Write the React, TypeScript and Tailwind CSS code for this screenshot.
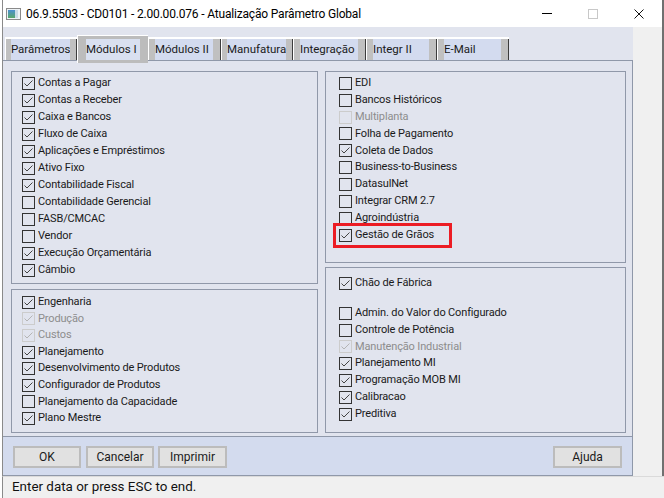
import React from 'react'

interface Item {
    label: string
    checked?: boolean
    disabled?: boolean
}

const leftTop: Item[] = [
    { label: 'Contas a Pagar', checked: true },
    { label: 'Contas a Receber', checked: true },
    { label: 'Caixa e Bancos', checked: true },
    { label: 'Fluxo de Caixa', checked: true },
    { label: 'Aplicações e Empréstimos', checked: true },
    { label: 'Ativo Fixo', checked: true },
    { label: 'Contabilidade Fiscal', checked: true },
    { label: 'Contabilidade Gerencial' },
    { label: 'FASB/CMCAC' },
    { label: 'Vendor' },
    { label: 'Execução Orçamentária', checked: true },
    { label: 'Câmbio', checked: true },
]

const leftBottom: Item[] = [
    { label: 'Engenharia', checked: true },
    { label: 'Produção', checked: true, disabled: true },
    { label: 'Custos', checked: true, disabled: true },
    { label: 'Planejamento', checked: true },
    { label: 'Desenvolvimento de Produtos', checked: true },
    { label: 'Configurador de Produtos', checked: true },
    { label: 'Planejamento da Capacidade' },
    { label: 'Plano Mestre', checked: true },
]

const rightTop: Item[] = [
    { label: 'EDI' },
    { label: 'Bancos Históricos' },
    { label: 'Multiplanta', disabled: true },
    { label: 'Folha de Pagamento' },
    { label: 'Coleta de Dados', checked: true },
    { label: 'Business-to-Business' },
    { label: 'DatasulNet' },
    { label: 'Integrar CRM 2.7' },
    { label: 'Agroindústria' },
    { label: 'Gestão de Grãos', checked: true },
]

const rightBottom: Item[] = [
    { label: 'Admin. do Valor do Configurado' },
    { label: 'Controle de Potência' },
    { label: 'Manutenção Industrial', checked: true, disabled: true },
    { label: 'Planejamento MI', checked: true },
    { label: 'Programação MOB MI', checked: true },
    { label: 'Calibracao', checked: true },
    { label: 'Preditiva', checked: true },
]

const tabs = [
    { label: 'Parâmetros', width: 'w-[72px]' },
    { label: 'Módulos I', width: 'w-[71px]', active: true },
    { label: 'Módulos II', width: 'w-[73px]' },
    { label: 'Manufatura', width: 'w-[72px]' },
    { label: 'Integração', width: 'w-[73px]' },
    { label: 'Integr II', width: 'w-[71px]' },
    { label: 'E-Mail', width: 'w-[72px]' },
]

function CheckRow({ item, rowClass }: { item: Item; rowClass: string }) {
    return (
        <div className={`flex items-center ${rowClass}`}>
            <span
                className={`flex size-[13px] shrink-0 items-center justify-center border ${
                    item.disabled ? 'border-[#cccccc]' : 'border-[#333333]'
                }`}
            >
                {item.checked && (
                    <svg width="11" height="11" viewBox="0 0 11 11">
                        <polyline
                            points="1.5,5.5 4,8 9.5,2.5"
                            fill="none"
                            stroke={item.disabled ? '#b4b4b4' : '#444444'}
                            strokeWidth="1"
                        />
                    </svg>
                )}
            </span>
            <span
                className={`ml-[3px] whitespace-nowrap text-[11px] tracking-[-0.15px] ${
                    item.disabled ? 'text-[#8d8d8d]' : 'text-[#1a1a1a]'
                }`}
            >
                {item.label}
            </span>
        </div>
    )
}

function WindowIcon() {
    return (
        <svg width="15" height="12" viewBox="0 0 15 12">
            <defs>
                <linearGradient id="ico" x1="0" y1="0" x2="0" y2="1">
                    <stop offset="0" stopColor="#4a8fd0" />
                    <stop offset="1" stopColor="#58a86a" />
                </linearGradient>
            </defs>
            <rect x="0.5" y="0.5" width="14" height="11" fill="#eef3f6" stroke="#8a8a8a" />
            <rect x="2" y="2" width="7" height="8" fill="url(#ico)" />
            <rect x="9" y="2" width="3" height="8" fill="#c9dbe6" />
        </svg>
    )
}

export default function App() {
    return (
        <div className="h-[498px] w-[664px] overflow-hidden bg-white font-['Roboto',sans-serif] text-[#1a1a1a]">
            <div className="ml-[2px] flex h-[476px] flex-col border-l border-r-2 border-l-[#8a8a8a] border-r-[#707070]">
                {/* Title bar */}
                <div className="flex h-[27px] shrink-0 items-center bg-white">
                    <div className="ml-[3px] flex items-center">
                        <WindowIcon />
                    </div>
                    <span className="ml-[5px] text-[12px] tracking-[-0.18px] text-black">
                        06.9.5503 - CD0101 - 2.00.00.076 - Atualização Parâmetro Global
                    </span>
                    <div className="ml-auto flex h-full">
                        <div className="flex w-[46px] items-center justify-center">
                            <span className="block h-px w-[10px] bg-black" />
                        </div>
                        <div className="flex w-[46px] items-center justify-center">
                            <span className="block size-[10px] border border-[#c8c8c8]" />
                        </div>
                        <div className="flex w-[46px] items-center justify-center">
                            <svg width="10" height="10" viewBox="0 0 10 10">
                                <path d="M0.5 0.5 L9.5 9.5 M9.5 0.5 L0.5 9.5" stroke="#111111" strokeWidth="1" />
                            </svg>
                        </div>
                    </div>
                </div>

                <div className="flex flex-1">
                    {/* Form area */}
                    <div className="flex w-[630px] flex-col bg-[#e1e4ee] pt-[10px]">
                        {/* Tabs */}
                        <div className="ml-[2px] flex h-[23px] items-start">
                            {tabs.map((t) =>
                                t.active ? (
                                    <div
                                        key={t.label}
                                        className={`relative z-10 -mt-[2px] flex h-[28px] shrink-0 border-l border-t border-white ${t.width}`}
                                    >
                                        <div className="flex flex-1 border-x-[8px] border-y-[3px] border-[#bcbcbc] bg-[#d9e0f0]">
                                            <span className="mt-[2px] text-[11.5px] leading-[16px]">{t.label}</span>
                                        </div>
                                    </div>
                                ) : (
                                    <div
                                        key={t.label}
                                        className={`flex h-[23px] shrink-0 border-l border-t-2 border-white ${t.width}`}
                                    >
                                        <div className="w-[6px] bg-[#c0c0c0]" />
                                        <div className="flex flex-1 items-center bg-[#d3dbef]">
                                            <span className="whitespace-nowrap text-[11.5px]">{t.label}</span>
                                        </div>
                                        <div className="w-[7px] bg-[#c0c0c0]" />
                                        <div className="w-px bg-[#3c3c3c]" />
                                    </div>
                                ),
                            )}
                        </div>

                        {/* Tab page */}
                        <div className="flex h-[377px] gap-[7px] border-b border-r border-t border-[#8f98a9] pl-[8px] pt-[10px]">
                            <div className="flex w-[307px] flex-col gap-[5px]">
                                <div className="h-[213px] border border-[#9098a9] pl-[10px] pt-[3px]">
                                    {leftTop.map((i) => (
                                        <CheckRow key={i.label} item={i} rowClass="h-[17px]" />
                                    ))}
                                </div>
                                <div className="h-[144px] border border-[#9098a9] pl-[10px] pt-[4px]">
                                    {leftBottom.map((i) => (
                                        <CheckRow key={i.label} item={i} rowClass="h-[16.6px]" />
                                    ))}
                                </div>
                            </div>
                            <div className="flex w-[301px] flex-col gap-[4px]">
                                <div className="relative h-[192px] border border-[#9098a9] pl-[13px] pt-[3px]">
                                    {rightTop.map((i) => (
                                        <CheckRow key={i.label} item={i} rowClass="h-[16.85px]" />
                                    ))}
                                    {/* highlight */}
                                    <div className="absolute left-[7px] top-[151px] h-[25px] w-[119px] border-[3px] border-[#ec1c24]" />
                                </div>
                                <div className="h-[166px] border border-[#9098a9] pl-[13px] pt-[7px]">
                                    <CheckRow item={{ label: 'Chão de Fábrica', checked: true }} rowClass="h-[16.85px]" />
                                    <div className="h-[13px]" />
                                    {rightBottom.map((i) => (
                                        <CheckRow key={i.label} item={i} rowClass="h-[16.83px]" />
                                    ))}
                                </div>
                            </div>
                        </div>

                        {/* Buttons */}
                        <div className="flex h-[39px] items-start border-b border-r border-[#8f98a9] bg-[#d3dbee] pl-[10px] pr-[10px] pt-[9px]">
                            <button className="h-[22px] w-[68px] border-2 border-[#bcbcbc] bg-[#e1e1e1] text-[12px]">OK</button>
                            <button className="ml-[5px] h-[22px] w-[68px] border-2 border-[#bcbcbc] bg-[#e1e1e1] text-[12px]">
                                Cancelar
                            </button>
                            <button className="ml-[4px] h-[22px] w-[69px] border-2 border-[#bcbcbc] bg-[#e1e1e1] text-[12px]">
                                Imprimir
                            </button>
                            <button className="ml-auto h-[22px] w-[69px] border-2 border-[#bcbcbc] bg-[#e1e1e1] text-[12px]">
                                Ajuda
                            </button>
                        </div>
                    </div>
                    <div className="flex-1 bg-[#f0f0f0]" />
                </div>
            </div>

            {/* Status bar */}
            <div className="ml-[2px] flex h-[22px] items-center border-l border-t border-l-[#8a8a8a] border-t-[#dadada] bg-[#f0f0f0] pl-[9px]">
                <span className="text-[13.4px] text-[#111111]">Enter data or press ESC to end.</span>
            </div>
        </div>
    )
}
